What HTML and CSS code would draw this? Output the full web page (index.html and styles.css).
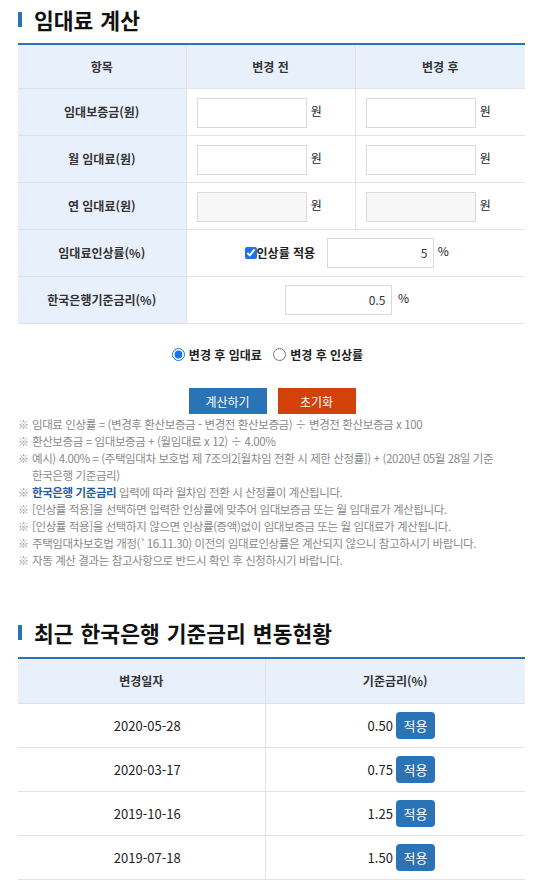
FILE: index.html
```html
<!DOCTYPE html>
<html lang="ko">
<head>
<meta charset="utf-8">
<title>임대료 계산</title>
<link rel="stylesheet" href="styles.css">
</head>
<body>
<div class="page">
  <h2 class="sec-title">임대료 계산</h2>
  <table class="calc">
    <colgroup><col class="c1"><col class="c2"><col class="c3"></colgroup>
    <thead>
      <tr><th>항목</th><th>변경 전</th><th>변경 후</th></tr>
    </thead>
    <tbody>
      <tr>
        <th>임대보증금(원)</th>
        <td class="inp"><input type="text" class="box"> 원</td>
        <td class="inp"><input type="text" class="box"> 원</td>
      </tr>
      <tr>
        <th>월 임대료(원)</th>
        <td class="inp"><input type="text" class="box"> 원</td>
        <td class="inp"><input type="text" class="box"> 원</td>
      </tr>
      <tr>
        <th>연 임대료(원)</th>
        <td class="inp"><input type="text" class="box ro" readonly> 원</td>
        <td class="inp"><input type="text" class="box ro" readonly> 원</td>
      </tr>
      <tr>
        <th>임대료인상률(%)</th>
        <td colspan="2" class="mid">
          <label class="chk"><input type="checkbox" checked>인상률 적용</label>
          <input type="text" class="box num" value="5"> %
        </td>
      </tr>
      <tr>
        <th>한국은행기준금리(%)</th>
        <td colspan="2" class="mid">
          <input type="text" class="box num" value="0.5"> %
        </td>
      </tr>
    </tbody>
  </table>

  <div class="radios">
    <label><input type="radio" name="mode" checked>변경 후 임대료</label>
    <label><input type="radio" name="mode">변경 후 인상률</label>
  </div>

  <div class="btns">
    <button class="btn blue">계산하기</button>
    <button class="btn red">초기화</button>
  </div>

  <ul class="notes">
    <li>임대료 인상률 = (변경후 환산보증금 - 변경전 환산보증금) ÷ 변경전 환산보증금 x 100</li>
    <li>환산보증금 = 임대보증금 + (월임대료 x 12) ÷ 4.00%</li>
    <li>예시) 4.00% = (주택임대차 보호법 제 7조의2[월차임 전환 시 제한 산정률]) + (2020년 05월 28일 기준 한국은행 기준금리)</li>
    <li><b>한국은행 기준금리</b> 입력에 따라 월차임 전환 시 산정률이 계산됩니다.</li>
    <li>[인상률 적용]을 선택하면 입력한 인상률에 맞추어 임대보증금 또는 월 임대료가 계산됩니다.</li>
    <li>[인상률 적용]을 선택하지 않으면 인상률(증액)없이 임대보증금 또는 월 임대료가 계산됩니다.</li>
    <li>주택임대차보호법 개정(`16.11.30) 이전의 임대료인상률은 계산되지 않으니 참고하시기 바랍니다.</li>
    <li>자동 계산 결과는 참고사항으로 반드시 확인 후 신청하시기 바랍니다.</li>
  </ul>

  <h2 class="sec-title second">최근 한국은행 기준금리 변동현황</h2>
  <table class="rates">
    <colgroup><col class="r1"><col class="r2"></colgroup>
    <thead>
      <tr><th>변경일자</th><th>기준금리(%)</th></tr>
    </thead>
    <tbody>
      <tr><td>2020-05-28</td><td><span class="rate">0.50</span><button class="apply">적용</button></td></tr>
      <tr><td>2020-03-17</td><td><span class="rate">0.75</span><button class="apply">적용</button></td></tr>
      <tr><td>2019-10-16</td><td><span class="rate">1.25</span><button class="apply">적용</button></td></tr>
      <tr><td>2019-07-18</td><td><span class="rate">1.50</span><button class="apply">적용</button></td></tr>
    </tbody>
  </table>
</div>
</body>
</html>
```

FILE: styles.css
```css
* { box-sizing: border-box; }
html, body { margin: 0; padding: 0; background: #fff; }
body {
  font-family: "Noto Sans CJK KR", "Noto Sans", sans-serif;
  color: #222;
  font-size: 12px;
}
.page {
  width: 525px;
  padding-left: 18px;
}
.sec-title {
  margin: 0;
  line-height: 28px;
  font-size: 21.5px;
  font-weight: bold;
  color: #111;
  word-spacing: 1px;
  display: flex;
  align-items: center;
  height: 43px;
  padding-bottom: 4px;
}
.sec-title::before {
  content: "";
  display: block;
  width: 4px;
  height: 15px;
  background: #2b73b7;
  margin-right: 12px;
}
.sec-title.second {
  margin-top: 48px;
  height: 40px;
  padding-bottom: 9px;
}

table {
  border-collapse: collapse;
  width: 507px;
  table-layout: fixed;
  border-top: 2px solid #2b73b7;
}
col.c1 { width: 168px; }
col.c2 { width: 169px; }
col.c3 { width: 170px; }
col.r1 { width: 247px; }
col.r2 { width: 260px; }

th, td {
  border: 1px solid #e3e3e3;
  padding: 0;
}
table tr > :first-child { border-left: none; }
table tr > :last-child { border-right: none; }
.calc thead th {
  height: 44px;
  background: #e8f0fb;
  font-weight: bold;
  color: #333;
  font-size: 12px;
}
.calc tbody th {
  height: 47px;
  background: #e8f0fb;
  font-weight: bold;
  color: #333;
  font-size: 12px;
}
.calc td.inp {
  padding-left: 10px;
  padding-top: 2px;
  font-size: 12px;
  color: #222;
  white-space: nowrap;
}
.calc td.mid {
  text-align: center;
  padding-right: 18px;
  white-space: nowrap;
  font-size: 12px;
}
.box {
  width: 110px;
  height: 30px;
  border: 1px solid #dadada;
  background: #fff;
  margin: 0 1px 0 0;
  padding: 0 5px;
  vertical-align: middle;
  font-family: "Noto Sans CJK KR", "Noto Sans", sans-serif;
  font-size: 12px;
  color: #333;
  outline: none;
}
.box.ro { background: #f7f7f7; }
.box.num { text-align: right; width: 107px; }
.calc tbody tr:last-child .box.num { margin-right: 3px; }
.chk {
  display: inline-flex;
  align-items: center;
  font-weight: bold;
  font-size: 12px;
  color: #222;
  vertical-align: middle;
  margin-right: 8px;
}
.chk input {
  margin: 0;
  width: 12px;
  height: 12px;
  accent-color: #1a73e8;
}

.radios {
  margin-top: 22px;
  width: 507px;
  padding-right: 8px;
  text-align: center;
  line-height: 18px;
  font-weight: bold;
  font-size: 12px;
  color: #222;
}
.radios label {
  display: inline-flex;
  align-items: center;
  margin: 0 4px;
}
.radios input {
  margin: 0 4px 0 0;
  width: 13px;
  height: 13px;
  accent-color: #1a73e8;
}

.btns {
  width: 507px;
  margin-top: 23px;
  display: flex;
  justify-content: center;
  gap: 11px;
  padding-left: 1px;
}
.btn {
  width: 78px;
  height: 26px;
  border: none;
  color: #fff;
  font-family: "Noto Sans CJK KR", "Noto Sans", sans-serif;
  font-size: 12px;
  padding: 0;
}
.btn.blue { background: #2b73b7; }
.btn.red { background: #d2410a; }

.notes {
  list-style: none;
  margin: 2px 0 0;
  padding: 0;
  width: 507px;
  color: #8a8a8a;
  font-size: 11.5px;
  line-height: 17px;
  letter-spacing: -0.4px;
  word-break: keep-all;
}
.notes li {
  position: relative;
  padding-left: 14px;
}
.notes li::before {
  content: "※";
  position: absolute;
  left: 0;
  top: 0;
  color: #999;
  font-size: 11px;
}
.notes b {
  color: #2b5f9c;
  font-weight: bold;
}

.rates thead th {
  height: 45px;
  background: #e8f0fb;
  font-weight: bold;
  color: #333;
  font-size: 12px;
}
.rates td {
  height: 44px;
  text-align: center;
  font-size: 13px;
  color: #222;
  padding-left: 12px;
}
.rate { vertical-align: middle; }
.apply {
  width: 39px;
  height: 27px;
  margin-left: 3px;
  border: none;
  border-radius: 4px;
  background: #2b73b7;
  color: #fff;
  font-family: "Noto Sans CJK KR", "Noto Sans", sans-serif;
  font-size: 13px;
  padding: 0;
  vertical-align: middle;
}
```
